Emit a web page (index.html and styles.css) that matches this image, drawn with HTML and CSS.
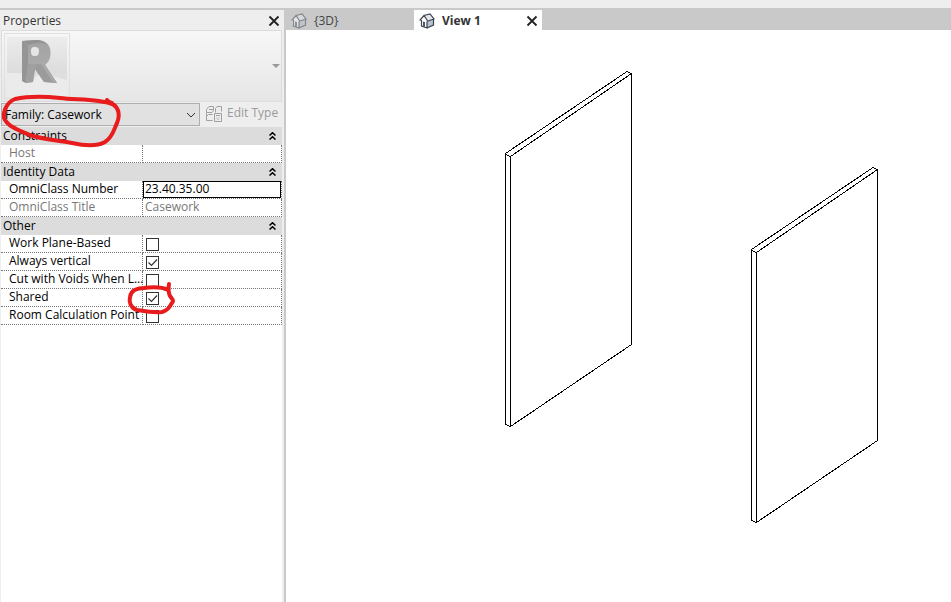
FILE: index.html
```
<!DOCTYPE html>
<html lang="en">
<head>
    <meta charset="UTF-8">
    <meta name="viewport" content="width=device-width, initial-scale=1.0">
    <title>Properties</title>
    <link rel="stylesheet" href="styles.css">
</head>
<body>
    <div class="topbar"></div>
    <div class="workspace">
        <aside class="properties">
            <div class="panel-title">
                <h2>Properties</h2>
                <button class="close" aria-label="Close properties">
                    <svg width="12" height="12" viewBox="0 0 12 12"><path d="M1.500 1.500 10.500 10.500M10.500 1.500 1.500 10.500"/></svg>
                </button>
            </div>

            <div class="type-preview">
                <div class="thumb">
                    <svg width="60" height="60" viewBox="0 0 60 60">
                        <defs>
                            <linearGradient id="wall" x1="0" y1="0" x2="0" y2="1">
                                <stop offset="0" stop-color="#ececec"/><stop offset="1" stop-color="#dcdcdc"/>
                            </linearGradient>
                            <linearGradient id="face" x1="0" y1="0" x2="0" y2="1">
                                <stop offset="0" stop-color="#a2a2a2"/><stop offset="1" stop-color="#b0b0b0"/>
                            </linearGradient>
                        </defs>
                        <rect width="60" height="36" fill="url(#wall)"/>
                        <path d="M0 36H60V60H0z" fill="#ebebeb"/>
                        <path d="M27 41 34 36 60 43V36H27z" fill="#dedede"/>
                        <path fill-rule="evenodd" fill="url(#face)" d="M15 4 29 3C38 3 44 8 43.500 16C43.500 21 42 25 38 28L50 46 37 45 28 32 26 45 19 46 15 44zM27 10C25 10 24 11 24 14C24 18 25 19 28 19C31 19 32 17 32 14C32 11 31 10 27 10z"/>
                        <path d="M15 4 21 9V27L19 46 15 44z" fill="#959595"/>
                        <path d="M21 27 19 46 26 45 28 32 29 27z" fill="#a0a0a0"/>
                        <path d="M29 27 38 28 50 46 37 45 28 32z" fill="#9b9b9b"/>
                        <path d="M15 4 29 3C35 3 39 5 42 9Q38 5 29 6L21 8z" fill="#939393"/>
                        <path d="M38 28 50 46 45 44 34 27z" fill="#a9a9a9"/>
                    </svg>
                </div>
                <span class="arrow"></span>
            </div>

            <div class="filter">
                <select aria-label="Type filter">
                    <option>Family: Casework</option>
                </select>
                <button class="edit-type" disabled>
                    <svg width="17" height="17" viewBox="0 0 17 17">
                        <path d="M.5 4.500 3 1.500H7.500V5.500L6 7.500H.5zM9.500 7.500V3.500L11 1.500H15.500V6.500M.5 7.500V15.500H6.500M.5 11.500 2.500 9.500H6.500M3 4.500H7"/>
                        <path d="M8.500 8.500H15.500V16.500H8.500zM10 10.500H14M10.500 13H11.500M12.500 13H13.500M11.500 14.500H12.500"/>
                    </svg>
                    Edit Type
                </button>
            </div>

            <table class="params">
                <colgroup><col class="name-col"><col></colgroup>
                <tbody>
                    <tr class="group"><th colspan="2"><div>Constraints <svg class="chevron" width="7" height="8" viewBox="0 0 7 8"><path d="M.5 3.500 3.500.700 6.500 3.500M.5 7.500 3.500 4.700 6.500 7.500"/></svg></div></th></tr>
                    <tr class="readonly"><td>Host</td><td></td></tr>
                </tbody>
                <tbody>
                    <tr class="group"><th colspan="2"><div>Identity Data <svg class="chevron" width="7" height="8" viewBox="0 0 7 8"><path d="M.5 3.500 3.500.700 6.500 3.500M.5 7.500 3.500 4.700 6.500 7.500"/></svg></div></th></tr>
                    <tr><td><label for="omniNumber">OmniClass Number</label></td><td class="editing"><input type="text" id="omniNumber" value="23.40.35.00"></td></tr>
                    <tr class="readonly"><td>OmniClass Title</td><td>Casework</td></tr>
                </tbody>
                <tbody>
                    <tr class="group"><th colspan="2"><div>Other <svg class="chevron" width="7" height="8" viewBox="0 0 7 8"><path d="M.5 3.500 3.500.700 6.500 3.500M.5 7.500 3.500 4.700 6.500 7.500"/></svg></div></th></tr>
                    <tr><td><label for="workPlane">Work Plane-Based</label></td><td class="check"><input type="checkbox" id="workPlane"></td></tr>
                    <tr><td><label for="vertical">Always vertical</label></td><td class="check"><input type="checkbox" id="vertical" checked></td></tr>
                    <tr><td><label for="voids">Cut with Voids When L...</label></td><td class="check"><input type="checkbox" id="voids"></td></tr>
                    <tr><td><label for="shared">Shared</label></td><td class="check"><input type="checkbox" id="shared" checked></td></tr>
                    <tr><td><label for="roomPoint">Room Calculation Point</label></td><td class="check"><input type="checkbox" id="roomPoint"></td></tr>
                </tbody>
            </table>
        </aside>

        <main class="views">
            <svg class="defs" width="0" height="0">
                <symbol id="house" viewBox="0 0 16 16">
                    <path d="M1 7 5 2 11 1 15 6V12L8 15 2 13z" fill="#fff"/>
                    <path d="M8 8 15 6V12L8 15z" fill="#b8c3cf"/>
                    <path d="M5 2 11 1 15 6 9 8z" fill="#e3e7ea"/>
                    <path d="M.7 7.500 5 2.500 9 8.500M5 2.500 11 1 15 6 9 8M2.500 7V13L8 15V8.500M8 15 14.500 12V6.500" fill="none" stroke="#3b4450" stroke-width="1.200"/>
                    <path d="M4 8.500 6 9V14L4 13.500z" fill="#4c5866"/>
                </symbol>
            </svg>
            <nav class="tabs">
                <button class="tab"><svg class="house" width="16" height="16"><use href="#house"/></svg>{3D}</button>
                <div class="tab active">
                    <button class="tab-name"><svg class="house" width="16" height="16"><use href="#house"/></svg>View 1</button>
                    <button class="close" aria-label="Close View 1">
                        <svg width="12" height="12" viewBox="0 0 12 12"><path d="M1.500 1.500 10.500 10.500M10.500 1.500 1.500 10.500"/></svg>
                    </button>
                </div>
            </nav>
            <div class="canvas">
                <svg width="100%" height="100%">
                    <defs>
                        <g id="board">
                            <path d="M.5 82.500V352.500L5.500 354.500 126.500 272.500V1.500L5.500 84.500V354.500M.5 82.500 5.500 84.500M.5 81.500 122-.5 126.500 1.500"/>
                        </g>
                    </defs>
                    <use href="#board" x="219" y="42"/>
                    <use href="#board" x="465" y="138"/>
                </svg>
            </div>
        </main>
    </div>

    <!-- red pen marks -->
    <svg class="markup" width="200" height="330">
        <path d="M107 100C108 103 113 102 112 104C98 99 75 100 60 98C42 96 24 97 15 99C7 102 3 111 4 118C7 126 18 130 30 135C44 140 58 140 72 143C86 146 98 146 105 142C113 137 114 129 117 123C121 113 118 105 108 102"/>
        <path d="M169 284C168 290 169 294 170 296C173 300 174 301 172 303C169 307 169 310 162 312C153 313 143 311 137 310C130 308 129 301 130 297C131 290 138 288 144 288C152 287 162 287 168 290"/>
    </svg>
</body>
</html>
```
FILE: styles.css
```
* { box-sizing: border-box; }
body {
    margin: 0;
    height: 100vh;
    display: flex;
    flex-direction: column;
    overflow: hidden;
    font: 12px/16px "Open Sans", "Noto Sans", sans-serif;
    color: #000;
    background: #eee;
}
button, input, select { font: inherit; color: inherit; margin: 0; }
button { border: none; background: none; padding: 0; }
svg { display: block; }
.topbar { height: 10px; background: #eee; border-bottom: 2px solid #c9c9c9; }
.workspace { flex: 1; display: flex; min-height: 0; }

/* properties panel */
.properties {
    width: 286px;
    flex: none;
    padding: 0 2px 0 1px;
    border-right: 2px solid #c9c9c9;
    background: linear-gradient(#fff, #fff) content-box, #eee;
}
.panel-title { height: 20px; display: flex; align-items: center; justify-content: space-between; padding: 2px 2px 0; background: #eee; color: #333; }
.panel-title h2 { margin: 0; font-size: 12px; font-weight: normal; }
.close svg { fill: none; stroke: #222; stroke-width: 1.8px; }
.type-preview {
    height: 72px;
    display: flex;
    align-items: center;
    justify-content: space-between;
    padding: 2px 1px 2px 2px;
    border: 1px solid #dcdcdc;
    background: linear-gradient(#f7f7f7, #e6e6e6);
}
.thumb { border: 1px solid #e0e0e0; padding: 3px 2px; width: 66px; height: 66px; }
.arrow { border: 4px solid transparent; border-top-color: #999; border-bottom: none; }
.filter { height: 25px; display: flex; align-items: center; gap: 6px; background: #eee; }
.filter select {
    appearance: none;
    width: 199px;
    height: 23px;
    padding: 0 3px;
    border: 1px solid #adadad;
    border-radius: 0;
    background: #e1e1e1 url("data:image/svg+xml,%3Csvg xmlns='http://www.w3.org/2000/svg' width='10' height='6'%3E%3Cpath d='M1 1l4 4 4-4' fill='none' stroke='%23333'/%3E%3C/svg%3E") no-repeat right 3px center;
}
.edit-type { display: flex; align-items: center; gap: 4px; padding-bottom: 3px; white-space: nowrap; color: #9b9b9b; }
.edit-type svg { fill: none; stroke: #a0a0a0; }

.params { width: 281px; border-spacing: 0; table-layout: fixed; }
.name-col { width: 142px; }
.params td, .params th { height: 18px; padding: 0; line-height: 16px; font-weight: normal; text-align: left; white-space: nowrap; }
.params td { border-bottom: 1px dotted #777; border-right: 1px dotted #777; padding: 0 0 2px 8px; line-height: 15px; }
.params td + td { padding-left: 2px; }
.group th { background: #dcdcdc; }
.group div { display: flex; align-items: center; justify-content: space-between; padding: 0 6px 0 2px; }
.chevron { fill: none; stroke: #000; stroke-width: 1.5px; }
.readonly { color: #777; }
.params td.editing { padding: 0; }
.editing input { display: block; width: 100%; height: 17px; padding: 0 1px 2px; border: 1px solid #000; outline: none; }
.params td.check { padding: 2px 0 0 3px; }
.check input {
    appearance: none;
    display: block;
    width: 13px;
    height: 13px;
    border: 1px solid #333;
    background: #fff;
}
.check input:checked { background: #fff url("data:image/svg+xml,%3Csvg xmlns='http://www.w3.org/2000/svg' width='11' height='11'%3E%3Cpath d='M1.500 5.500l3 3 5.500-6' fill='none' stroke='%23333' stroke-width='1.200'/%3E%3C/svg%3E"); }

/* view tabs and drawing area */
.views { flex: 1; display: flex; flex-direction: column; min-width: 0; position: relative; }
.defs { position: absolute; }
.tabs { height: 20px; display: flex; background: #c9c9c9; color: #444; }
.tab { width: 128px; display: flex; align-items: center; gap: 7px; padding: 2px 4px 0 5px; }
.tab .house { opacity: 0.5; }
.active { justify-content: space-between; background: #fff; font-weight: bold; color: #333; }
.tab.active .house { opacity: 1; }
.tab-name { display: flex; align-items: center; gap: 7px; }
.canvas { flex: 1; min-height: 0; background: #fff; }
.canvas svg { fill: none; stroke: #000; shape-rendering: crispEdges; }

.markup { position: absolute; left: 0; top: 0; pointer-events: none; fill: none; stroke: #e81c1c; stroke-width: 4px; stroke-linecap: round; stroke-linejoin: round; }
```
